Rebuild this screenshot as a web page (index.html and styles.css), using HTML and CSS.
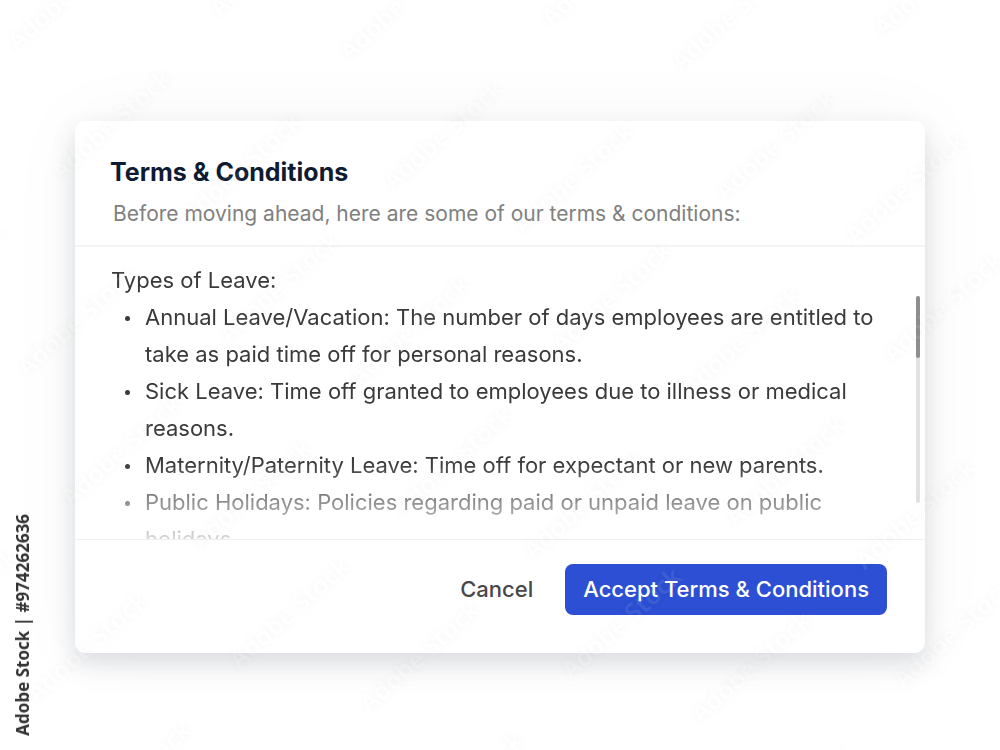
FILE: index.html
```html
<!DOCTYPE html>
<html lang="en">
  <head>
    <meta charset="UTF-8" />
    <meta name="viewport" content="width=device-width, initial-scale=1.0" />
    <title>Terms &amp; Conditions</title>
    <link rel="stylesheet" href="styles.css">
  </head>
  <body>
    <main class="modal" role="dialog" aria-labelledby="modalTitle">
      <header class="modal-header">
        <h1 id="modalTitle">Terms &amp; Conditions</h1>
        <p>Before moving ahead, here are some of our terms &amp; conditions:</p>
      </header>
      <section class="modal-body">
        <div class="terms">
          <h2>Types of Leave:</h2>
          <ul>
            <li>Annual Leave/Vacation: The number of days employees are entitled to take as paid time off for personal reasons.</li>
            <li>Sick Leave: Time off granted to employees due to illness or medical reasons.</li>
            <li>Maternity/Paternity Leave: Time off for expectant or new parents.</li>
            <li>Public Holidays: Policies regarding paid or unpaid leave on public holidays.</li>
          </ul>
        </div>
        <div class="scroll-track"><div class="scroll-thumb"></div></div>
      </section>
      <footer class="modal-footer">
        <button type="button" class="btn">Cancel</button>
        <button type="button" class="btn btn-primary">Accept Terms &amp; Conditions</button>
      </footer>
    </main>

    <svg class="watermark" aria-hidden="true">
      <defs>
        <text id="mark" transform="rotate(-42)">Adobe Stock</text>
        <g id="tile">
          <use href="#mark" transform="translate(17 52)" />
          <use href="#mark" transform="translate(219 18)" />
          <use href="#mark" transform="translate(61 182)" />
          <use href="#mark" transform="translate(191 225)" />
        </g>
        <g id="row">
          <use href="#tile" x="-332" y="-10" />
          <use href="#tile" />
          <use href="#tile" x="332" y="10" />
          <use href="#tile" x="664" y="20" />
        </g>
      </defs>
      <use href="#row" />
      <use href="#row" x="10" y="326" />
      <use href="#row" x="20" y="652" />
    </svg>
    <div class="credit">Adobe Stock | #974262636</div>
  </body>
</html>
```
FILE: styles.css
```css
* {
  box-sizing: border-box;
}
body {
  margin: 0;
  padding: 121px 20px 40px;
  font-family: Inter, "Liberation Sans", sans-serif;
  background-color: #fff;
  color: #3a3a3c;
}
h1, h2, p, ul {
  margin: 0;
  padding: 0;
}
.modal {
  max-width: 850px;
  margin: 0 auto;
  background: #fff;
  border-radius: 10px;
  box-shadow: 0 10px 24px rgba(30, 41, 70, 0.15), 0 0 80px rgba(30, 41, 59, 0.04);
}
.modal-header {
  padding: 35px 35px 15px;
  border-bottom: 2px solid #f5f5f6;
}
.modal-header h1 {
  font-size: 25px;
  line-height: 32px;
  font-weight: 700;
  color: #0f1b33;
}
.modal-header p {
  margin-top: 10px;
  padding-left: 3px;
  font-size: 21px;
  line-height: 32px;
  color: #808080;
}
.modal-body {
  position: relative;
}
.terms {
  height: 292px;
  padding: 15px 36px 0;
  overflow: hidden;
  font-size: 22px;
  line-height: 37px;
  -webkit-mask-image: linear-gradient(#000 74%, rgba(0, 0, 0, 0.55) 88%, rgba(0, 0, 0, 0.2));
  mask-image: linear-gradient(#000 74%, rgba(0, 0, 0, 0.55) 88%, rgba(0, 0, 0, 0.2));
}
.terms h2 {
  font-size: inherit;
  font-weight: 400;
}
.terms ul {
  list-style: none;
}
.terms li {
  position: relative;
  padding-left: 34px;
}
.terms li::before {
  content: "";
  position: absolute;
  left: 14px;
  top: 17px;
  width: 5px;
  height: 5px;
  border-radius: 50%;
  background: currentColor;
}
.scroll-track {
  position: absolute;
  top: 49px;
  right: 5px;
  bottom: 36px;
  width: 4px;
  border-radius: 2px;
  background: #e2e2e2;
}
.scroll-thumb {
  height: 30%;
  border-radius: 2px;
  background: #8e8e8e;
}
.modal-footer {
  display: flex;
  justify-content: flex-end;
  gap: 0;
  padding: 24px 38px 38px;
  border-top: 1px solid #efeff3;
}
.btn {
  padding: 9px 18px 10px;
  border: none;
  border-radius: 8px;
  background: none;
  font-family: inherit;
  font-size: 22px;
  line-height: 32px;
  font-weight: 500;
  color: #48484a;
  cursor: pointer;
}
.btn-primary {
  margin-left: 14px;
  background: #2c4fd3;
  color: #fff;
}
.watermark {
  position: fixed;
  inset: 0;
  width: 100%;
  height: 100%;
  pointer-events: none;
  font-family: "Noto Sans", sans-serif;
  font-size: 25px;
  font-weight: 600;
  fill: #fff;
  opacity: 0.08;
  filter: drop-shadow(0 0 4px rgba(0, 0, 0, 0.5));
}
.credit {
  position: fixed;
  left: 10px;
  bottom: 14px;
  writing-mode: vertical-rl;
  transform: rotate(180deg);
  font-family: "Noto Sans", sans-serif;
  font-size: 17px;
  line-height: 26px;
  font-weight: 700;
  color: #333;
}
```
